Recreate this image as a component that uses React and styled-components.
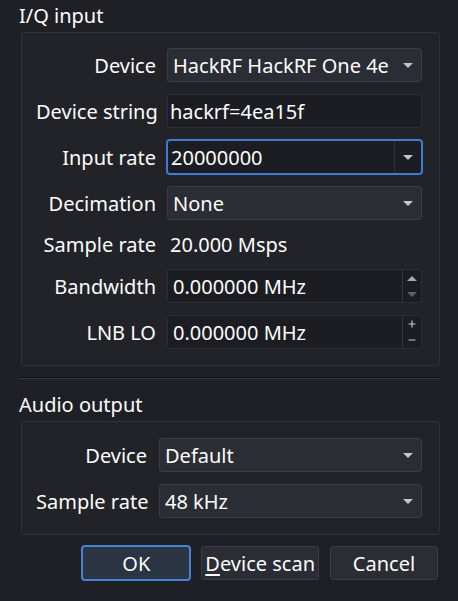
import React from "react";
import styled, { createGlobalStyle } from "styled-components";

const GlobalStyle = createGlobalStyle`
  html, body {
    margin: 0;
    padding: 0;
    background: #1e2026;
  }
  body {
    font-family: "Noto Sans", "DejaVu Sans", sans-serif;
    font-size: 20px;
    color: #fcfcfc;
  }
`;

const Dialog = styled.div`
  width: 458px;
  height: 601px;
  box-sizing: border-box;
  padding: 2px 18px 0 21px;
  display: flex;
  flex-direction: column;
`;

const GroupTitle = styled.div`
  line-height: 27px;
  margin: ${(p) => p.top || 0}px 0 3px -2px;
  white-space: nowrap;
`;

const GroupFrame = styled.div`
  display: grid;
  grid-template-columns: ${(p) => p.labelWidth}px 1fr;
  grid-template-rows: ${(p) => p.rows};
  column-gap: ${(p) => p.colGap}px;
  row-gap: 12px;
  align-items: center;
  padding: ${(p) => p.padTop}px 17px ${(p) => p.padBottom}px 14px;
  border: 1px solid #2f3238;
  border-radius: 3px;
  background: #212329;
`;

const Label = styled.div`
  text-align: right;
  white-space: nowrap;
  line-height: 27px;
`;

const Value = styled.div`
  padding-left: 3px;
  line-height: 27px;
  white-space: nowrap;
`;

const Combo = styled.div`
  height: 34px;
  box-sizing: border-box;
  display: flex;
  align-items: center;
  border: 1px solid #3a3d44;
  border-radius: 3px;
  background: #2a2d33;
  overflow: hidden;
`;

const ComboText = styled.div`
  flex: 1;
  min-width: 0;
  overflow: hidden;
  white-space: nowrap;
  padding-left: 5px;
  line-height: 27px;
`;

const ArrowBox = styled.div`
  width: ${(p) => p.w}px;
  align-self: stretch;
  display: flex;
  align-items: center;
  justify-content: center;
  border-left: ${(p) => (p.split ? "1px solid #2e3137" : "none")};
  box-sizing: border-box;
`;

const LineEdit = styled.div`
  height: 34px;
  box-sizing: border-box;
  display: flex;
  align-items: center;
  border: 1px solid #2b2e34;
  border-radius: 3px;
  background: #1b1d22;
  padding-left: ${(p) => p.pad || 2}px;
  white-space: nowrap;
  overflow: hidden;
`;

const EditCombo = styled(LineEdit)`
  border-color: #3e7cd3;
  box-shadow: 0 0 0 1px #3e7cd3;
  padding-left: 3px;
`;

const EditText = styled.div`
  flex: 1;
  line-height: 27px;
`;

const SpinButtons = styled.div`
  width: 19px;
  align-self: stretch;
  display: flex;
  flex-direction: column;
  border-left: 1px solid #33363c;
  box-sizing: border-box;
`;

const SpinHalf = styled.div`
  flex: 1;
  display: flex;
  align-items: center;
  justify-content: center;
`;

const Separator = styled.div`
  margin: 11px 0 0 -3px;
  height: 1px;
  background: #0f1014;
  border-bottom: 1px solid #373a41;
`;

const ButtonRow = styled.div`
  display: flex;
  justify-content: flex-end;
  gap: 11px;
  margin-top: 11px;
  padding-right: 2px;
`;

const Button = styled.div`
  height: 34px;
  min-width: 108px;
  box-sizing: border-box;
  padding: 0 3px;
  display: flex;
  align-items: center;
  justify-content: center;
  border: 1px solid ${(p) => (p.primary ? "#4583d6" : "#3b3e45")};
  box-shadow: ${(p) => (p.primary ? "0 0 0 1px #4583d6" : "none")};
  border-radius: 3px;
  background: ${(p) => (p.primary ? "#2b3442" : "#2a2d33")};
  white-space: nowrap;
  line-height: 27px;
`;

const Mnemonic = styled.span`
  text-decoration: underline;
  text-underline-offset: 3px;
`;

const Triangle = ({ up, color = "#c4c5c8" }) => (
  <svg width="10" height="5" viewBox="0 0 10 5">
    <path d={up ? "M0 5 L5 0 L10 5 Z" : "M0 0 L10 0 L5 5 Z"} fill={color} />
  </svg>
);

const Plus = () => (
  <svg width="8" height="8" viewBox="0 0 8 8">
    <path d="M4 0.5 V7.5 M0.5 4 H7.5" stroke="#c8c9cc" strokeWidth="1.2" />
  </svg>
);

const Minus = () => (
  <svg width="8" height="8" viewBox="0 0 8 8">
    <path d="M0.5 4 H7.5" stroke="#c8c9cc" strokeWidth="1.2" />
  </svg>
);

const ComboBox = ({ text }) => (
  <Combo>
    <ComboText>{text}</ComboText>
    <ArrowBox w={26}>
      <Triangle />
    </ArrowBox>
  </Combo>
);

const SpinBox = ({ text, plusMinus }) => (
  <LineEdit pad={5}>
    <EditText>{text}</EditText>
    <SpinButtons>
      <SpinHalf>{plusMinus ? <Plus /> : <Triangle up color="#a9aaad" />}</SpinHalf>
      <SpinHalf>{plusMinus ? <Minus /> : <Triangle color="#5d5f64" />}</SpinHalf>
    </SpinButtons>
  </LineEdit>
);

export default function App() {
  return (
    <>
      <GlobalStyle />
      <Dialog>
        <GroupTitle>I/Q input</GroupTitle>
        <GroupFrame
          labelWidth={120}
          colGap={11}
          padTop={15}
          padBottom={16}
          rows="34px 34px 34px 34px 25px 34px 34px"
        >
          <Label>Device</Label>
          <ComboBox text="HackRF HackRF One 4e" />

          <Label>Device string</Label>
          <LineEdit>hackrf=4ea15f</LineEdit>

          <Label>Input rate</Label>
          <EditCombo>
            <EditText>20000000</EditText>
            <ArrowBox w={27} split>
              <Triangle />
            </ArrowBox>
          </EditCombo>

          <Label>Decimation</Label>
          <ComboBox text="None" />

          <Label>Sample rate</Label>
          <Value>20.000 Msps</Value>

          <Label>Bandwidth</Label>
          <SpinBox text="0.000000 MHz" />

          <Label>LNB LO</Label>
          <SpinBox text="0.000000 MHz" plusMinus />
        </GroupFrame>

        <Separator />

        <GroupTitle top={12}>Audio output</GroupTitle>
        <GroupFrame
          labelWidth={111}
          colGap={12}
          padTop={16}
          padBottom={16}
          rows="34px 34px"
        >
          <Label>Device</Label>
          <ComboBox text="Default" />

          <Label>Sample rate</Label>
          <ComboBox text="48 kHz" />
        </GroupFrame>

        <ButtonRow>
          <Button primary>OK</Button>
          <Button>
            <span>
              <Mnemonic>D</Mnemonic>evice scan
            </span>
          </Button>
          <Button>Cancel</Button>
        </ButtonRow>
      </Dialog>
    </>
  );
}
